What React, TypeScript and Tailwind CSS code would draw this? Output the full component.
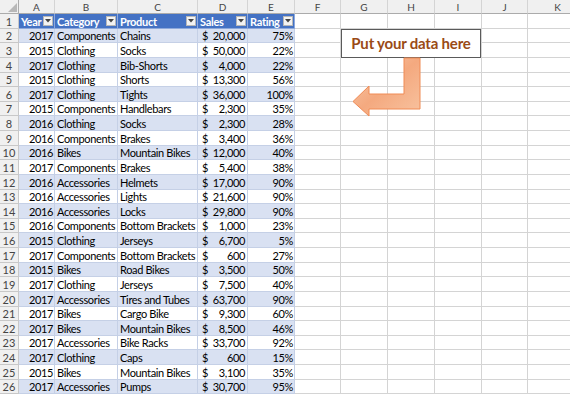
import React from "react";

type Row = [string, string, string, string, string];

const ROWS: Row[] = [
  ["2017", "Components", "Chains", "20,000", "75%"],
  ["2015", "Clothing", "Socks", "50,000", "22%"],
  ["2017", "Clothing", "Bib-Shorts", "4,000", "22%"],
  ["2015", "Clothing", "Shorts", "13,300", "56%"],
  ["2017", "Clothing", "Tights", "36,000", "100%"],
  ["2015", "Components", "Handlebars", "2,300", "35%"],
  ["2016", "Clothing", "Socks", "2,300", "28%"],
  ["2016", "Components", "Brakes", "3,400", "36%"],
  ["2016", "Bikes", "Mountain Bikes", "12,000", "40%"],
  ["2017", "Components", "Brakes", "5,400", "38%"],
  ["2016", "Accessories", "Helmets", "17,000", "90%"],
  ["2016", "Accessories", "Lights", "21,600", "90%"],
  ["2016", "Accessories", "Locks", "29,800", "90%"],
  ["2016", "Components", "Bottom Brackets", "1,000", "23%"],
  ["2015", "Clothing", "Jerseys", "6,700", "5%"],
  ["2017", "Components", "Bottom Brackets", "600", "27%"],
  ["2015", "Bikes", "Road Bikes", "3,500", "50%"],
  ["2017", "Clothing", "Jerseys", "7,500", "40%"],
  ["2017", "Accessories", "Tires and Tubes", "63,700", "90%"],
  ["2017", "Bikes", "Cargo Bike", "9,300", "60%"],
  ["2017", "Bikes", "Mountain Bikes", "8,500", "46%"],
  ["2017", "Accessories", "Bike Racks", "33,700", "92%"],
  ["2017", "Clothing", "Caps", "600", "15%"],
  ["2015", "Bikes", "Mountain Bikes", "3,100", "35%"],
  ["2017", "Accessories", "Pumps", "30,700", "95%"],
];

const COLS = [
  { key: "A", w: "w-[36px]" },
  { key: "B", w: "w-[63px]" },
  { key: "C", w: "w-[80px]" },
  { key: "D", w: "w-[50px]" },
  { key: "E", w: "w-[47px]" },
  { key: "F", w: "w-[46px]" },
  { key: "G", w: "w-[47px]" },
  { key: "H", w: "w-[47px]" },
  { key: "I", w: "w-[47px]" },
  { key: "J", w: "w-[46px]" },
  { key: "K", w: "w-[60px]" },
];

const EMPTY = ["F", "G", "H", "I", "J", "K"];

function FilterButton() {
  return (
    <span className="absolute right-[1px] top-[2px] w-[10px] h-[10px] bg-[#F3F3F3] border border-[#B8B8B8] flex items-center justify-center">
      <svg width="6" height="4" viewBox="0 0 6 4">
        <path d="M0 0 L6 0 L3 3.5 Z" fill="#444" />
      </svg>
    </span>
  );
}

function RowNum({ n }: { n: number }) {
  return (
    <div className="w-[19px] shrink-0 bg-[#F0F0F0] border-r border-b border-[#C8C8C8] text-[#444] text-[11px] flex items-end justify-center leading-[13px]">
      {n}
    </div>
  );
}

export default function App() {
  return (
    <div
      className="relative w-[570px] h-[395px] overflow-hidden bg-white text-black"
      style={{ fontFamily: "Lato, 'Open Sans', sans-serif" }}
    >
      {/* column letters */}
      <div className="flex h-[14px]">
        <div className="relative w-[19px] shrink-0 bg-[#F0F0F0] border-r border-b border-[#ABABAB]">
          <svg className="absolute right-[1px] bottom-[1px]" width="9" height="9" viewBox="0 0 9 9">
            <path d="M9 0 L9 9 L0 9 Z" fill="#B8B8B8" />
          </svg>
        </div>
        {COLS.map((c) => (
          <div
            key={c.key}
            className={`${c.w} shrink-0 bg-[#F0F0F0] border-r border-b border-r-[#D4D4D4] border-b-[#ABABAB] text-[#444] text-[10px] flex items-center justify-center leading-none`}
          >
            {c.key}
          </div>
        ))}
      </div>

      {/* header row of the table */}
      <div className="flex h-[14.64px]">
        <RowNum n={1} />
        {["Year", "Category", "Product", "Sales", "Rating"].map((h, i) => (
          <div
            key={h}
            className={`${COLS[i].w} relative shrink-0 bg-[#4472C4] border-r border-b border-[#8EA9DB] text-white font-bold text-[11px] tracking-[-0.3px] leading-[13px] pl-[2px] flex items-end whitespace-nowrap overflow-hidden`}
          >
            {h}
            <FilterButton />
          </div>
        ))}
        {EMPTY.map((k, i) => (
          <div key={k} className={`${COLS[i + 5].w} shrink-0 border-r border-b border-[#D4D4D4]`} />
        ))}
      </div>

      {ROWS.map((r, idx) => {
        const band = idx % 2 === 0 ? "bg-[#D9E1F2]" : "bg-white";
        const cell = `shrink-0 border-r border-b border-[#C5D0E6] text-[11px] tracking-[-0.35px] leading-[13px] flex items-end whitespace-nowrap overflow-hidden ${band}`;
        return (
          <div key={idx} className="flex h-[14.64px]">
            <RowNum n={idx + 2} />
            <div className={`w-[36px] justify-end pr-[1px] ${cell}`}>{r[0]}</div>
            <div className={`w-[63px] pl-[2px] ${cell}`}>{r[1]}</div>
            <div className={`w-[80px] pl-[2px] ${cell}`}>{r[2]}</div>
            <div className={`w-[50px] justify-between pl-[4px] pr-[2px] ${cell}`}>
              <span>$</span>
              <span>{r[3]}</span>
            </div>
            <div className={`w-[47px] justify-end pr-[1px] ${cell}`}>{r[4]}</div>
            {EMPTY.map((k, i) => (
              <div key={k} className={`${COLS[i + 5].w} shrink-0 border-r border-b border-[#D4D4D4]`} />
            ))}
          </div>
        );
      })}

      {/* callout */}
      <div className="absolute left-[341px] top-[29px] w-[140px] h-[29px] bg-white border-[1.5px] border-[#5A5A5A] flex items-center justify-center text-[15px] font-bold tracking-[-0.2px] text-[#9A4B16]">
        Put your data here
      </div>
      <svg className="absolute left-[350px] top-[55px]" width="75" height="66" viewBox="0 0 75 66">
        <defs>
          <linearGradient id="arrowFill" x1="0" y1="0" x2="1" y2="1">
            <stop offset="0" stopColor="#F8CBAD" />
            <stop offset="0.5" stopColor="#F4A97F" />
            <stop offset="1" stopColor="#F8C3A0" />
          </linearGradient>
        </defs>
        <path
          d="M54 3 L70 3 L70 54 L19 54 L19 61 L3 46.5 L19 31 L19 39 L54 39 Z"
          fill="url(#arrowFill)"
          stroke="#F08B55"
          strokeWidth="1"
        />
      </svg>
    </div>
  );
}
